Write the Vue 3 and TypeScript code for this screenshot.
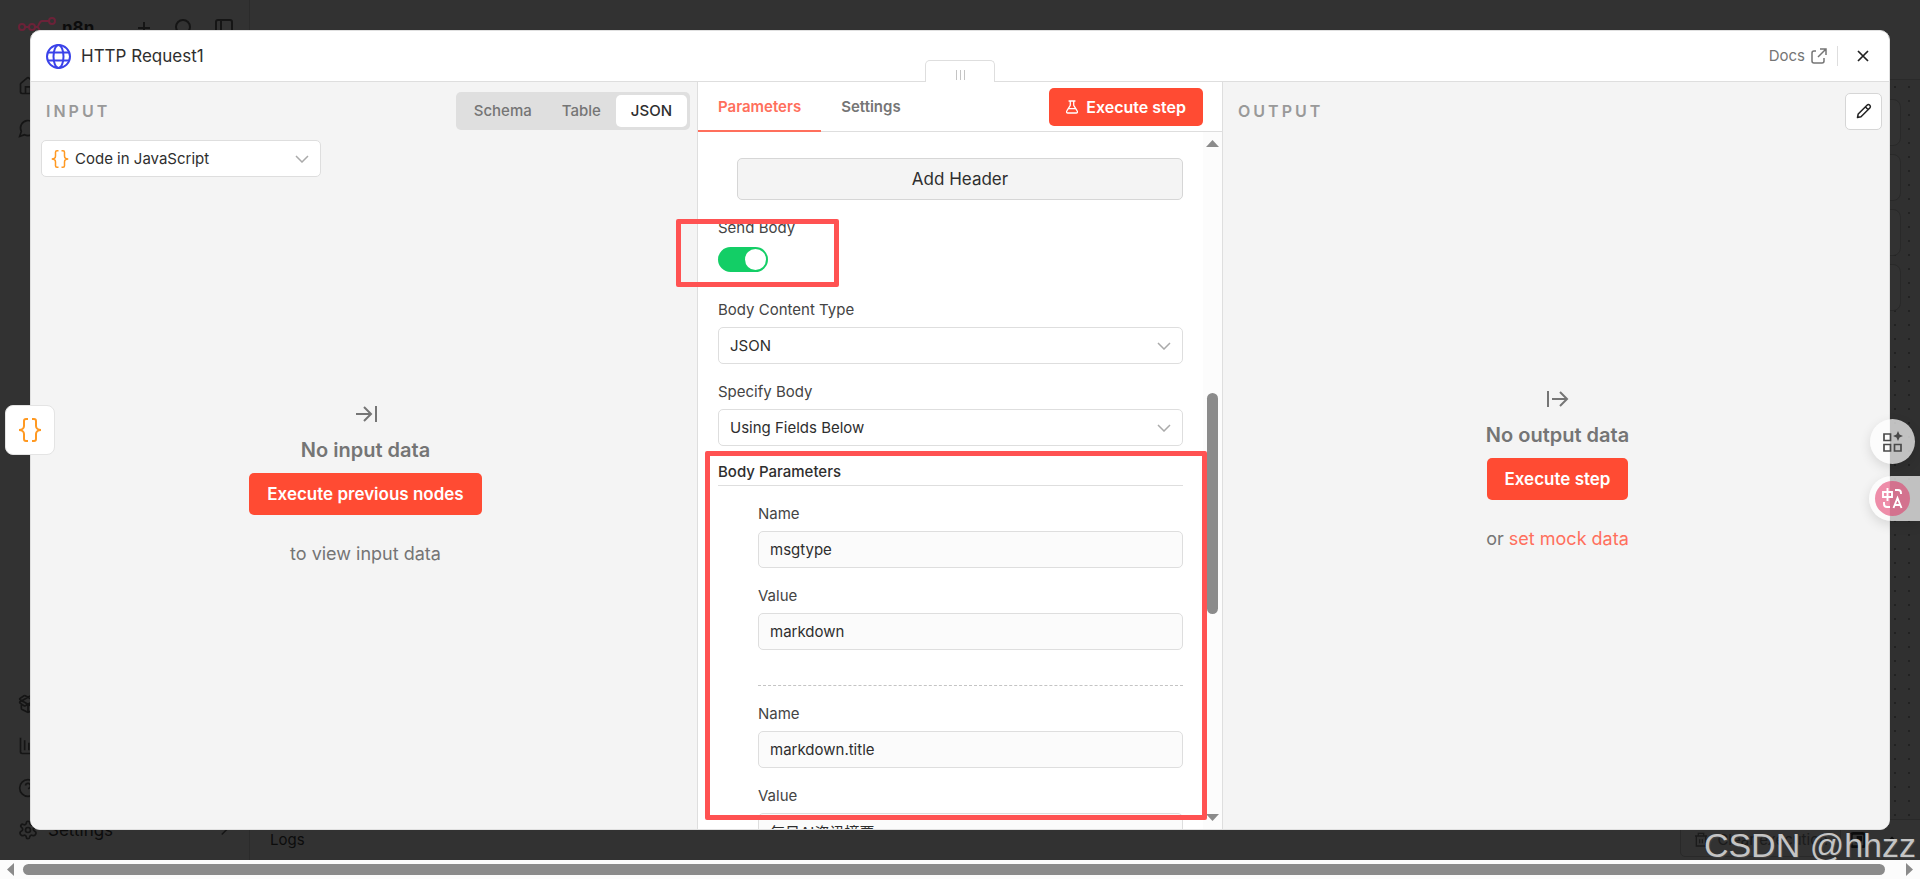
<script setup lang="ts">
import { ref } from 'vue'

interface Field {
  id: string
  label: string
  value: string
}

const viewModes = ['Schema', 'Table', 'JSON']
const activeMode = ref('JSON')
const inputNode = ref('Code in JavaScript')
const sendBody = ref(true)
const contentType = ref('JSON')
const specifyBody = ref('Using Fields Below')

const parameters = ref<Field[][]>([
  [
    { id: 'name-0', label: 'Name', value: 'msgtype' },
    { id: 'value-0', label: 'Value', value: 'markdown' },
  ],
  [
    { id: 'name-1', label: 'Name', value: 'markdown.title' },
    { id: 'value-1', label: 'Value', value: '每日AI资讯摘要' },
  ],
])
</script>

<template>
  <div class="page">
    <div class="workspace">
      <aside class="sidebar">
        <div class="brand">
          <svg class="logo" width="38" height="22" viewBox="0 0 38 22" fill="none" stroke="#6b2238" stroke-width="2">
            <circle cx="4" cy="10" r="3" />
            <circle cx="14" cy="10" r="3" />
            <circle cx="34" cy="4" r="3" />
            <circle cx="31" cy="17" r="3" />
            <path d="M7 10h4M17 10h2c2 0 2-6 5-6h7M19 10c3 0 2 7 6 7h3" />
          </svg>
          <span class="brand-name">n8n</span>
          <svg class="icon" width="20" height="20" viewBox="0 0 20 20"><path d="M10 4v12M4 10h12" /></svg>
          <svg class="icon" width="20" height="20" viewBox="0 0 20 20"><circle cx="9" cy="9" r="7" /><path d="M14 14l5 5" /></svg>
          <svg class="icon" width="20" height="20" viewBox="0 0 20 20"><rect x="2" y="2" width="16" height="16" rx="2" /><path d="M7 2v16" /></svg>
        </div>
        <nav class="nav-top">
          <svg class="icon" width="20" height="20" viewBox="0 0 24 24"><path d="M15 21v-8H9v8M3 10a2 2 0 0 1 .7-1.5l7-6a2 2 0 0 1 2.600 0l7 6A2 2 0 0 1 21 10v9a2 2 0 0 1-2 2H5a2 2 0 0 1-2-2z" /></svg>
          <svg class="icon" width="20" height="20" viewBox="0 0 24 24"><path d="M7.900 20A9 9 0 1 0 4 16.100L2 22Z" /></svg>
        </nav>
        <nav class="nav-bottom">
          <svg class="icon" width="20" height="20" viewBox="0 0 24 24"><path d="M12 22v-9M15.200 2.200a1.700 1.700 0 0 1 1.600 0l4.700 3a1 1 0 0 1 0 1.700L8.800 14a1.700 1.700 0 0 1-1.600 0l-4.700-3a1 1 0 0 1 0-1.700zM20 13v4a2 2 0 0 1-1 1.700l-6 3a2 2 0 0 1-2 0l-6-3A2 2 0 0 1 4 17v-4M21.500 11a1 1 0 0 0 0-1.700L8.800 2.200a1.700 1.700 0 0 0-1.600 0l-4.700 3a1 1 0 0 0 0 1.700L15.200 14a1.700 1.700 0 0 0 1.600 0z" /></svg>
          <svg class="icon" width="20" height="20" viewBox="0 0 24 24"><path d="M3 2v17a2 2 0 0 0 2 2h17M8 17V5M13 17V8M18 17v-6" /></svg>
          <svg class="icon" width="20" height="20" viewBox="0 0 24 24"><circle cx="12" cy="12" r="10" /><path d="M9 9a3 3 0 0 1 6 1c0 2-3 3-3 3M12 17h.010" /></svg>
          <a class="settings-link" href="#settings">
            <svg class="icon" width="20" height="20" viewBox="0 0 24 24"><path d="M10 3.500a2 2 0 0 1 4 0 2.300 2.300 0 0 0 3.400 2 2 2 0 0 1 2.300 3.400 2.300 2.300 0 0 0 0 4.200 2 2 0 0 1-2.300 5.400 2.300 2.300 0 0 0-3.400 2 2 2 0 0 1-4 0 2.300 2.300 0 0 0-3.400-2 2 2 0 0 1-2.300-5.400 2.300 2.300 0 0 0 0-4.200 2 2 0 0 1 2.300-3.400 2.300 2.300 0 0 0 3.400-2z" /><circle cx="12" cy="12" r="3" /></svg>
            <span>Settings</span>
            <svg class="icon push" width="18" height="18" viewBox="0 0 24 24"><path d="M9 18l6-6-6-6" /></svg>
          </a>
        </nav>
      </aside>
      <div class="editor">
        <div class="editor-top"></div>
        <div class="canvas">
          <i v-for="n in 4" :key="n" class="canvas-card"></i>
        </div>
        <div class="logs">
          <span>Logs</span>
          <button class="clear" type="button">
            <svg width="16" height="18" viewBox="0 0 24 24" fill="none" stroke="currentColor" stroke-width="2"><path d="M3 6h18M19 6v15H5V6M8 6V2h8v4M10 11v6M14 11v6" /></svg>
            Clear execution
          </button>
          <svg class="popout" width="16" height="16" viewBox="0 0 24 24" fill="none" stroke="currentColor" stroke-width="4"><rect x="2" y="2" width="20" height="20" rx="3" /><path d="M8 16l8-8M10 8h6v6" /></svg>
          <svg width="16" height="16" viewBox="0 0 24 24" fill="none" stroke="currentColor" stroke-width="3"><path d="M6 15l6-6 6 6" /></svg>
        </div>
      </div>

      <div class="overlay">
        <section class="dialog" role="dialog" aria-label="HTTP Request1">
          <header class="dialog-head">
            <svg width="25" height="25" viewBox="0 0 25 25" fill="none" stroke="#3a42e9" stroke-width="2">
              <circle cx="12.500" cy="12.500" r="11.500" />
              <ellipse cx="12.500" cy="12.500" rx="5" ry="11.500" />
              <path d="M2 8.500h21M2 16.500h21" />
            </svg>
            <h1>HTTP Request1</h1>
            <a class="docs" href="#docs">
              Docs
              <svg width="18" height="18" viewBox="0 0 18 18" fill="none" stroke="currentColor" stroke-width="1.500"><path d="M10 2h6v6M16 2L8 10M6 4H4a2 2 0 0 0-2 2v8a2 2 0 0 0 2 2h8a2 2 0 0 0 2-2v-3" /></svg>
            </a>
            <button class="close" type="button" aria-label="Close">
              <svg width="12" height="12" viewBox="0 0 12 12" fill="none" stroke="#222" stroke-width="1.700"><path d="M1 1l10 10M11 1L1 11" /></svg>
            </button>
          </header>

          <div class="columns">
            <section class="panel">
              <div class="panel-head">
                <h2>INPUT</h2>
                <div class="modes">
                  <button
                    v-for="mode in viewModes"
                    :key="mode"
                    type="button"
                    :class="{ active: mode === activeMode }"
                    @click="activeMode = mode"
                  >{{ mode }}</button>
                </div>
              </div>
              <div class="select node-select">
                <svg class="braces" width="18" height="18" viewBox="0 0 24 24"><path d="M10 1H8a2 2 0 0 0-2 2v5c0 2-2 4-5 4 3 0 5 2 5 4v5a2 2 0 0 0 2 2h2M14 1h2a2 2 0 0 1 2 2v5c0 2 2 4 5 4-3 0-5 2-5 4v5a2 2 0 0 1-2 2h-2" /></svg>
                <select v-model="inputNode" aria-label="Input node"><option>Code in JavaScript</option></select>
                <svg class="chevron" width="14" height="8" viewBox="0 0 14 8"><path d="M1 1l6 6 6-6" /></svg>
              </div>
              <div class="empty">
                <svg width="22" height="18" viewBox="0 0 22 18"><path d="M1 9h15M9 2l7 7-7 7M21 1v16" /></svg>
                <h3>No input data</h3>
                <button class="primary" type="button">Execute previous nodes</button>
                <p>to view input data</p>
              </div>
            </section>

            <section class="settings">
              <div class="drag-handle" aria-hidden="true"><i></i><i></i><i></i></div>
              <div class="tabs">
                <button class="tab active" type="button">Parameters</button>
                <button class="tab" type="button">Settings</button>
                <button class="primary compact" type="button">
                  <svg width="12" height="14" viewBox="0 0 14 16" fill="none" stroke="#fff" stroke-width="1.500"><path d="M3 1h8M5 1v5L1 12.500C0 14 1 15 2 15h10c1 0 2-1 1-2.500L9 6V1M3 10h8" /></svg>
                  Execute step
                </button>
              </div>
              <div class="scroll-area">
                <form class="form" @submit.prevent>
                  <button class="add" type="button">Add Header</button>
                  <label for="send-body">Send Body</label>
                  <input id="send-body" v-model="sendBody" class="toggle" type="checkbox" role="switch" />
                  <label for="content-type">Body Content Type</label>
                  <div class="select">
                    <select id="content-type" v-model="contentType"><option>JSON</option></select>
                    <svg class="chevron" width="14" height="8" viewBox="0 0 14 8"><path d="M1 1l6 6 6-6" /></svg>
                  </div>
                  <label for="specify-body">Specify Body</label>
                  <div class="select">
                    <select id="specify-body" v-model="specifyBody"><option>Using Fields Below</option></select>
                    <svg class="chevron" width="14" height="8" viewBox="0 0 14 8"><path d="M1 1l6 6 6-6" /></svg>
                  </div>
                  <h4>Body Parameters</h4>
                  <fieldset v-for="(group, i) in parameters" :key="i">
                    <template v-for="field in group" :key="field.id">
                      <label :for="field.id">{{ field.label }}</label>
                      <input :id="field.id" v-model="field.value" type="text" />
                    </template>
                  </fieldset>
                </form>
                <div class="vbar" aria-hidden="true">
                  <svg width="13" height="7" viewBox="0 0 13 7"><path d="M0 7L6.500 0 13 7z" /></svg>
                  <div class="vtrack"><i class="vthumb"></i></div>
                  <svg width="13" height="7" viewBox="0 0 13 7"><path d="M0 0h13L6.500 7z" /></svg>
                </div>
              </div>
              <i class="mark mark-toggle"></i>
              <i class="mark mark-params"></i>
            </section>

            <section class="panel output">
              <div class="panel-head">
                <h2>OUTPUT</h2>
                <button class="edit" type="button" aria-label="Edit output">
                  <svg width="16" height="16" viewBox="0 0 16 16" fill="none" stroke="#222" stroke-width="1.500" stroke-linejoin="round"><path d="M1.500 14.500l.7-3.500L11 2.200a1.900 1.900 0 0 1 2.800 2.800L5 13.800zM9.500 4l2.500 2.500" /></svg>
                </button>
              </div>
              <div class="empty">
                <svg width="22" height="18" viewBox="0 0 22 18"><path d="M1 1v16M5 9h15M13 2l7 7-7 7" /></svg>
                <h3>No output data</h3>
                <button class="primary" type="button">Execute step</button>
                <p>or <a href="#mock">set mock data</a></p>
              </div>
            </section>
          </div>
        </section>
      </div>

      <button class="prev-node" type="button" aria-label="Previous node">
        <svg class="braces" width="24" height="24" viewBox="0 0 24 24"><path d="M10 1H8a2 2 0 0 0-2 2v5c0 2-2 4-5 4 3 0 5 2 5 4v5a2 2 0 0 0 2 2h2M14 1h2a2 2 0 0 1 2 2v5c0 2 2 4 5 4-3 0-5 2-5 4v5a2 2 0 0 1-2 2h-2" /></svg>
      </button>
      <button class="apps" type="button" aria-label="Tools">
        <svg width="20" height="21" viewBox="0 0 20 21" fill="none" stroke="#4a4a4a" stroke-width="1.700"><path d="M1 3h6.500v6.500H1zM1 13.500h6.500V20H1zM11.500 13.500H18V20h-6.500z" /><path fill="#4a4a4a" stroke="none" d="M15 0l1.500 3.500L20 5l-3.500 1.500L15 10l-1.500-3.500L10 5l3.500-1.500z" /></svg>
      </button>
      <button class="translate" type="button" aria-label="Translate">
        <span>
          <svg width="21" height="21" viewBox="0 0 21 21" fill="none" stroke="#fff" stroke-width="1.900"><path d="M1 4h9v5H1zM5.500 0v13M13 2h3a3 3 0 0 1 3 3v1M2 14v2a3 3 0 0 0 3 3h3M11.500 20l4-10 4 10M13 17h5" /></svg>
        </span>
      </button>
      <div class="watermark">CSDN @hhzz</div>
    </div>
    <div class="hbar" aria-hidden="true">
      <svg width="7" height="13" viewBox="0 0 7 13"><path d="M7 0v13L0 6.500z" /></svg>
      <i class="hthumb"></i>
      <svg width="7" height="13" viewBox="0 0 7 13"><path d="M0 0l7 6.500L0 13z" /></svg>
    </div>
  </div>
</template>

<style>
body {
  margin: 0;
  overflow: hidden;
}
</style>

<style scoped>
* {
  box-sizing: border-box;
}
.page {
  display: flex;
  flex-direction: column;
  height: 100vh;
  background: #fcfcfc;
  color: #2e2e2e;
  font-family: Inter, "Noto Sans CJK SC", sans-serif;
  font-size: 15px;
  line-height: 20px;
}
button,
input,
select {
  font: inherit;
  color: inherit;
  margin: 0;
}
button {
  border: 0;
  padding: 0;
  cursor: pointer;
}
h1,
h2,
h3,
h4,
p {
  margin: 0;
}
svg {
  flex: none;
}

/* Dimmed editor behind the dialog */
.workspace {
  position: relative;
  display: flex;
  flex: 1;
  min-height: 0;
  overflow: hidden;
  background: #323232;
  color: #0c0c0c;
}
.icon {
  fill: none;
  stroke: #151515;
  stroke-width: 2;
}
.sidebar {
  display: flex;
  flex-direction: column;
  width: 250px;
  padding: 17px 16px 20px 18px;
  border-right: 1px solid #2b2b2b;
}
.brand {
  display: flex;
  align-items: center;
  gap: 20px;
}
.brand-name {
  margin: 0 20px 0 -14px;
  font-size: 17px;
  font-weight: 700;
}
.nav-top,
.nav-bottom {
  display: flex;
  flex-direction: column;
  gap: 22px;
}
.nav-top {
  margin-top: 37px;
}
.nav-bottom {
  margin-top: auto;
}
.settings-link {
  display: flex;
  align-items: center;
  gap: 10px;
  color: inherit;
  font-size: 17px;
  text-decoration: none;
}
.push {
  margin-left: auto;
}
.editor {
  display: flex;
  flex: 1;
  flex-direction: column;
}
.editor-top {
  height: 80px;
  border-bottom: 1px solid #2a2a2a;
}
.canvas {
  display: flex;
  flex: 1;
  flex-direction: column;
  align-items: flex-end;
  gap: 8px;
  padding: 19px 19px 0 0;
  background-color: #303030;
  background-image: radial-gradient(circle, #222 1px, transparent 1px);
  background-size: 14px 14px;
}
.canvas-card {
  width: 60px;
  height: 47px;
  border: 1px solid #292929;
  border-radius: 8px;
  background: #323232;
}
.logs {
  display: flex;
  align-items: center;
  gap: 9px;
  height: 41px;
  padding: 0 20px;
  border-top: 1px solid #292929;
}
.clear {
  display: flex;
  align-items: center;
  gap: 8px;
  height: 34px;
  margin-left: auto;
  padding: 0 12px;
  border: 1px solid #292929;
  border-radius: 5px;
  background: none;
  color: #1b1b1b;
}
.popout {
  margin-right: 9px;
}

/* Dialog */
.overlay {
  position: absolute;
  inset: 0;
  display: flex;
  padding: 30px;
  color: #2e2e2e;
}
.dialog {
  display: flex;
  flex: 1;
  flex-direction: column;
  min-width: 0;
  border: 1px solid #e0e0e0;
  border-radius: 10px;
  background: #fff;
}
.dialog-head {
  display: flex;
  align-items: center;
  height: 51px;
  padding: 0 20px 0 15px;
  border-bottom: 1px solid #dedede;
}
.dialog-head h1 {
  margin-left: 10px;
  font-size: 17px;
  font-weight: 400;
}
.docs {
  display: flex;
  align-items: center;
  gap: 5px;
  margin-left: auto;
  padding-right: 9px;
  border-right: 1px solid #dedede;
  color: #757575;
  text-decoration: none;
}
.close {
  display: flex;
  margin-left: 19px;
  background: none;
}
.columns {
  display: grid;
  grid-template-columns: minmax(0, 1fr) 526px minmax(0, 1fr);
  flex: 1;
  min-height: 0;
}
.panel {
  display: flex;
  flex-direction: column;
  padding: 10px 7px 0 10px;
  border-radius: 0 0 0 9px;
  background: #f4f4f4;
}
.output {
  border-radius: 0 0 9px 0;
}
.panel-head {
  display: flex;
  align-items: center;
  justify-content: space-between;
  height: 38px;
  padding-left: 5px;
}
.panel-head h2 {
  color: #999;
  font-size: 16px;
  font-weight: 600;
  letter-spacing: 3px;
}
.edit {
  display: flex;
  align-items: center;
  justify-content: center;
  width: 37px;
  height: 37px;
  border: 1px solid #d6d6d6;
  border-radius: 5px;
  background: #fff;
}
.modes {
  display: flex;
  height: 38px;
  padding: 3px;
  border-radius: 5px;
  background: #dfdfdf;
}
.modes button {
  padding: 0 15px;
  border-radius: 5px;
  background: none;
  color: #757575;
  font-weight: 500;
}
.modes .active {
  background: #fff;
  color: #2e2e2e;
}
.select {
  display: flex;
  align-items: center;
  height: 37px;
  padding: 0 11px;
  border: 1px solid #dedede;
  border-radius: 5px;
  background: #fff;
}
.select select {
  flex: 1;
  min-width: 0;
  height: 100%;
  padding: 0;
  border: 0;
  outline: 0;
  appearance: none;
  background: none;
}
.chevron {
  fill: none;
  stroke: #aaa;
  stroke-width: 1.500;
  pointer-events: none;
}
.braces {
  fill: none;
  stroke: #ff9922;
  stroke-width: 2;
}
.node-select {
  gap: 6px;
  width: 280px;
  margin-top: 10px;
  padding-left: 9px;
}
.empty {
  display: flex;
  flex: 1;
  flex-direction: column;
  align-items: center;
  justify-content: center;
  padding-bottom: 35px;
  color: #757575;
  font-size: 18px;
}
.output .empty {
  padding-bottom: 18px;
}
.panel .empty {
  line-height: 26px;
}
.empty svg {
  fill: none;
  stroke: #757575;
  stroke-width: 2;
}
.empty h3 {
  margin: 14px 0 10px;
  font-size: 20px;
  font-weight: 600;
}
.empty p {
  margin-top: 26px;
}
.empty a {
  color: #ff6f5c;
  text-decoration: none;
}
.primary {
  display: flex;
  align-items: center;
  height: 42px;
  padding: 0 18px;
  border-radius: 5px;
  background: #ff4b33;
  color: #fff;
  font-size: 17px;
  font-weight: 600;
}

/* Parameters column */
.settings {
  position: relative;
  display: flex;
  flex-direction: column;
  min-height: 0;
  border: solid #dedede;
  border-width: 0 1px;
}
.drag-handle {
  position: absolute;
  top: -22px;
  left: 50%;
  display: flex;
  justify-content: center;
  gap: 3px;
  width: 70px;
  height: 22px;
  margin-left: -35px;
  padding-top: 9px;
  border: 1px solid #dedede;
  border-bottom: 0;
  border-radius: 5px 5px 0 0;
  background: #fff;
}
.drag-handle i {
  width: 1px;
  height: 10px;
  background: #c4c4c4;
}
.tabs {
  display: flex;
  align-items: center;
  height: 50px;
  padding-right: 19px;
  border-bottom: 1px solid #dedede;
}
.tab {
  height: 50px;
  padding: 2px 20px 0;
  border-bottom: 2px solid transparent;
  background: none;
  color: #757575;
  font-weight: 600;
}
.tab.active {
  border-color: #ff6f5c;
  color: #ff6f5c;
}
.compact {
  gap: 8px;
  height: 38px;
  margin-left: auto;
  padding: 0 17px;
  font-size: 16px;
}
.scroll-area {
  display: flex;
  flex: 1;
  min-height: 0;
}
.form {
  display: flex;
  flex: 1;
  flex-direction: column;
  min-width: 0;
  padding: 26px 20px 0;
  overflow: hidden;
}
.form > *,
fieldset > * {
  flex: none;
}
.add {
  height: 42px;
  margin-left: 19px;
  border: 1px solid #d6d6d6;
  border-radius: 5px;
  background: #f4f4f4;
  font-size: 17px;
}
label {
  margin: 18px 0 7px;
  color: #444;
}
.toggle {
  width: 50px;
  height: 25px;
  margin: 2px 0 10px;
  padding: 2px;
  border-radius: 13px;
  appearance: none;
  background: #ccc;
}
.toggle::before {
  display: block;
  width: 21px;
  height: 21px;
  border-radius: 50%;
  background: #fff;
  content: "";
}
.toggle:checked {
  background: #13ce66;
}
.toggle:checked::before {
  margin-left: auto;
}
h4 {
  margin-top: 16px;
  padding-bottom: 3px;
  border-bottom: 1px solid #dedede;
  font-size: 15px;
  font-weight: 500;
}
fieldset {
  display: flex;
  flex-direction: column;
  min-width: 0;
  margin: 0 0 0 40px;
  padding: 0;
  border: 0;
}
fieldset + fieldset {
  margin-top: 35px;
  border-top: 1px dashed #c4c4c4;
}
fieldset input {
  height: 37px;
  padding: 0 11px;
  border: 1px solid #dedede;
  border-radius: 5px;
  outline: 0;
  background: #fbfbfb;
}
.vbar {
  display: flex;
  flex-direction: column;
  align-items: center;
  width: 19px;
  padding: 8px 0;
  background: #fcfcfc;
}
.vtrack {
  display: flex;
  flex: 1;
  flex-direction: column;
}
.vtrack::before {
  flex: 246;
  content: "";
}
.vtrack::after {
  flex: 200;
  content: "";
}
.vthumb {
  flex: 221;
  width: 11px;
  border-radius: 6px;
  background: #8b8b8b;
}
.vbar svg,
.hbar svg {
  fill: #8b8b8b;
}
.mark {
  position: absolute;
  border: 5px solid #ff5252;
  border-radius: 2px;
  pointer-events: none;
}
.mark-toggle {
  top: 137px;
  left: -22px;
  width: 163px;
  height: 68px;
}
.mark-params {
  top: 369px;
  left: 7px;
  width: 502px;
  height: 369px;
}

/* Floating controls */
.prev-node,
.apps,
.translate {
  position: absolute;
  display: flex;
  align-items: center;
  justify-content: center;
}
.prev-node {
  top: 405px;
  left: 5px;
  width: 50px;
  height: 50px;
  border: 1px solid #e4e4e4;
  border-radius: 8px;
  background: #fff;
}
.apps {
  top: 419px;
  right: 5px;
  width: 45px;
  height: 45px;
  border-radius: 50%;
  background: rgba(255, 255, 255, 0.7);
  box-shadow: 0 4px 12px rgba(0, 0, 0, 0.12);
}
.translate {
  top: 476px;
  right: 0;
  width: 51px;
  height: 45px;
  padding-right: 4px;
  border-radius: 23px 0 0 23px;
  background: rgba(255, 255, 255, 0.7);
  box-shadow: 0 4px 12px rgba(0, 0, 0, 0.12);
}
.translate span {
  display: flex;
  align-items: center;
  justify-content: center;
  width: 35px;
  height: 35px;
  border-radius: 50%;
  background: rgba(225, 50, 100, 0.55);
}
.watermark {
  position: absolute;
  right: 4px;
  bottom: 0;
  color: #c4c4c4;
  font-family: "Liberation Sans", Arial, sans-serif;
  font-size: 34px;
  line-height: 30px;
  text-shadow: 1px 1px 1px #444;
}
.hbar {
  display: flex;
  align-items: center;
  gap: 9px;
  height: 19px;
  padding: 0 7px;
}
.hthumb {
  flex: 1;
  height: 11px;
  margin-right: 12px;
  border-radius: 6px;
  background: #8b8b8b;
}
</style>
